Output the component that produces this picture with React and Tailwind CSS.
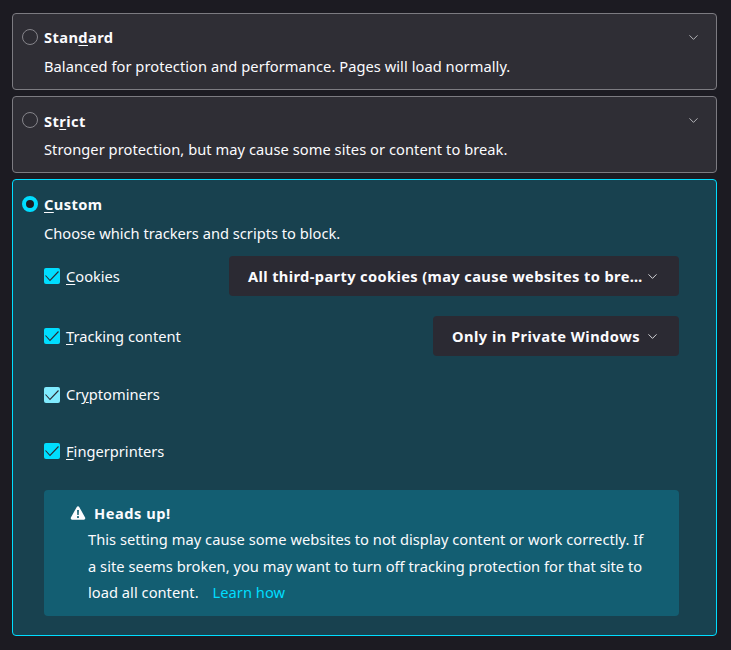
import React from "react";
import { ChevronDown } from "lucide-react";

function Radio({ selected }) {
  if (selected) {
    return <span className="w-4 h-4 rounded-full border-[4px] border-[#00ddff] bg-[#1c1b22] shrink-0" />;
  }
  return <span className="w-4 h-4 rounded-full border border-[#86858b] bg-[#2e2d34] shrink-0" />;
}

function Check({ light }) {
  return (
    <span className={`w-4 h-4 rounded-[2px] shrink-0 flex items-center justify-center ${light ? "bg-[#80ebff]" : "bg-[#00ddff]"}`}>
      <svg width="16" height="16" viewBox="0 0 16 16" fill="none">
        <path d="M1.5 7.5 L6 12.5 L14.5 3.5" stroke="#2b2a33" strokeWidth="1.1" />
      </svg>
    </span>
  );
}

function Key({ children }) {
  return <span className="underline underline-offset-2">{children}</span>;
}

function Level({ title, titleClass, children }) {
  return (
    <div className="h-[77px] rounded-[4px] border border-[#7c7b81] bg-[#2f2e35] pl-[9px] pr-[15px] pt-[12px]">
      <div className="flex items-center gap-[6px] h-[22px]">
        <Radio />
        <span className={`flex-1 font-bold tracking-[0.4px] text-[#fbfbfe] ${titleClass}`}>{title}</span>
        <ChevronDown size={15} strokeWidth={1.3} className="text-[#d0d0d4]" />
      </div>
      <p className="ml-[22px] mt-[7px] leading-[22px] tracking-[0.05px] text-[#fbfbfe]">{children}</p>
    </div>
  );
}

function Dropdown({ children, className }) {
  return (
    <div className={`h-10 rounded-[4px] bg-[#2b2a33] pl-[19px] pr-[19px] flex items-center justify-between font-bold text-[#fbfbfe] ${className}`}>
      <span>{children}</span>
      <ChevronDown size={15} strokeWidth={1.3} className="shrink-0" />
    </div>
  );
}

export default function App() {
  return (
    <div className="w-[731px] h-[650px] overflow-hidden bg-[#1c1b22] pl-3 pr-[14px] pt-[13px] text-[14.67px] font-['Noto_Sans',sans-serif]">
      <div className="flex flex-col gap-[6px]">
        <Level title={<>Stan<Key>d</Key>ard</>} titleClass="">Balanced for protection and performance. Pages will load normally.</Level>
        <Level title={<>St<Key>r</Key>ict</>} titleClass="pt-[2px]">Stronger protection, but may cause some sites or content to break.</Level>

        <div className="h-[457px] rounded-[4px] border border-[#00ddff] bg-[#18414f] pl-[9px] pr-[37px] pt-[13px] text-[#fbfbfe]">
          <div className="flex items-center gap-[6px] h-[22px]">
            <Radio selected />
            <span className="font-bold tracking-[0.4px]"><Key>C</Key>ustom</span>
          </div>
          <div className="ml-[22px]">
            <p className="mt-[7px] leading-[22px]">Choose which trackers and scripts to block.</p>
            <div className="mt-[12px] flex items-center h-10">
              <Check />
              <span className="ml-[6px] flex-1"><Key>C</Key>ookies</span>
              <Dropdown className="w-[450px] tracking-[0.36px]">All third-party cookies (may cause websites to bre…</Dropdown>
            </div>
            <div className="mt-5 flex items-center h-10">
              <Check />
              <span className="ml-[6px] flex-1"><Key>T</Key>racking content</span>
              <Dropdown className="w-[246px] tracking-[0.45px]">Only in Private Windows</Dropdown>
            </div>
            <div className="mt-[28px] flex items-center h-[22px]">
              <Check light />
              <span className="ml-[6px] -translate-y-px">Cr<Key>y</Key>ptominers</span>
            </div>
            <div className="mt-[34px] flex items-center h-[22px]">
              <Check />
              <span className="ml-[6px]"><Key>F</Key>ingerprinters</span>
            </div>
            <div className="mt-[28px] h-[126px] rounded-[4px] bg-[#135e72] pl-[26px] pr-[30px] pt-[12px]">
              <div className="flex items-center gap-[8px] h-[22px]">
                <svg width="16" height="16" viewBox="0 0 16 16">
                  <path fillRule="evenodd" fill="#fbfbfe" d="M8 1.2c-.5 0-1 .3-1.2.7L.9 12.6c-.5 1 .2 2.1 1.2 2.1h11.8c1 0 1.7-1.1 1.2-2.1L9.2 1.9C9 1.5 8.5 1.2 8 1.2zM7.1 5h1.8l-.2 5H7.3L7.1 5zM8 11a1.1 1.1 0 1 1 0 2.2A1.1 1.1 0 0 1 8 11z" />
                </svg>
                <span className="font-bold tracking-[0.5px]">Heads up!</span>
              </div>
              <p className="ml-[18px] mt-[2px] leading-[26.67px] tracking-[0.03px]">
                This setting may cause some websites to not display content or work correctly. If a site seems broken, you may want to turn off tracking protection for that site to load all content.
                <span className="ml-[14px] text-[#00ddff]">Learn how</span>
              </p>
            </div>
          </div>
        </div>
      </div>
    </div>
  );
}
